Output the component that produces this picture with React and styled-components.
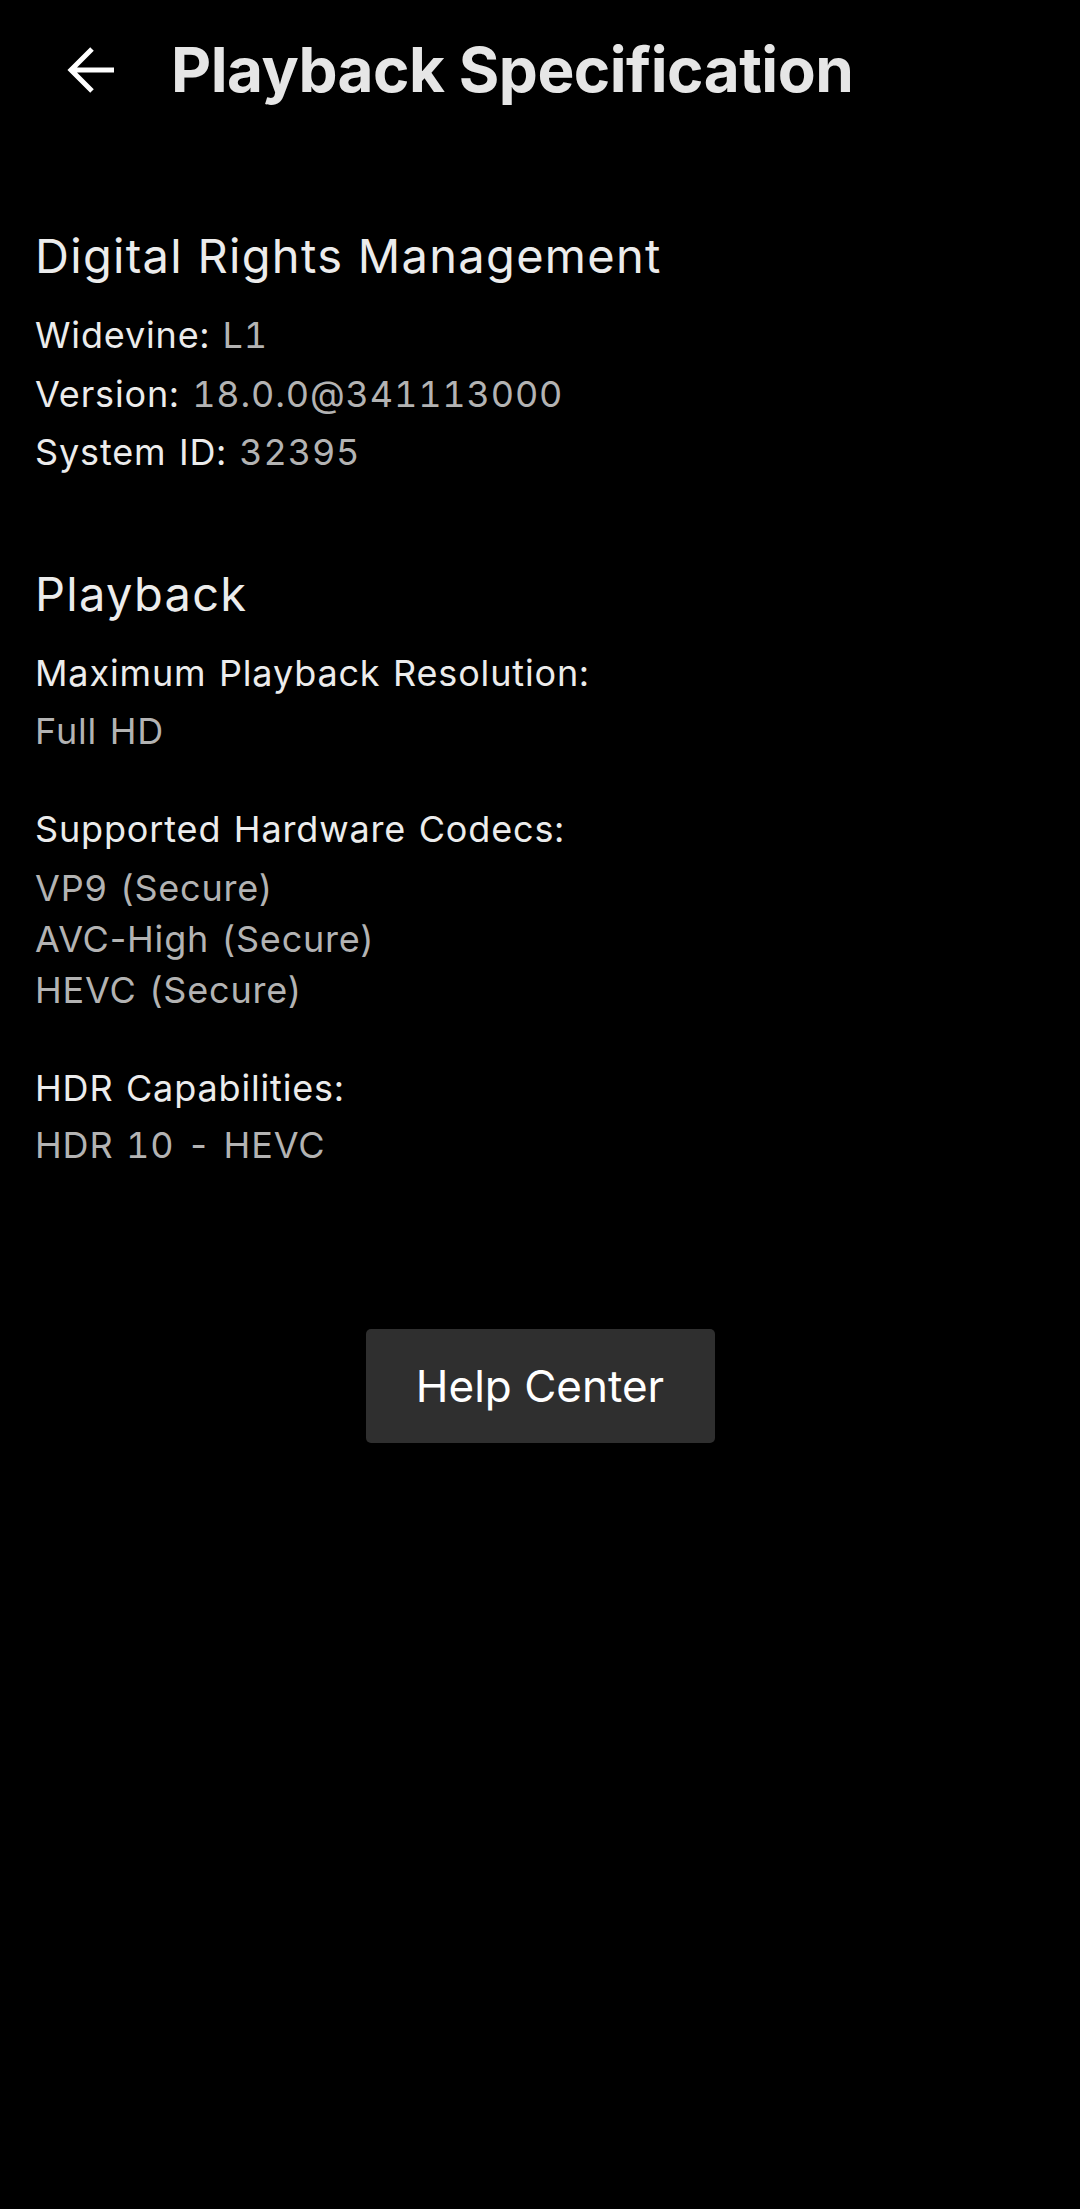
import React from "react";
import styled, { createGlobalStyle } from "styled-components";

const GlobalStyle = createGlobalStyle`
  html, body {
    margin: 0;
    padding: 0;
    background: #000;
  }
  body {
    font-family: Inter, "Noto Sans", sans-serif;
    -webkit-font-smoothing: antialiased;
  }
`;

const Screen = styled.div`
  width: 1080px;
  min-height: 2209px;
  background: #000;
  color: #e6e6e6;
`;

const Header = styled.header`
  display: flex;
  align-items: center;
  gap: 55px;
  padding: 39px 0 0 66px;
  height: 62px;
`;

const BackButton = styled.button`
  display: flex;
  align-items: center;
  justify-content: center;
  width: 50px;
  height: 50px;
  padding: 0;
  border: none;
  background: transparent;
  color: #fff;
  cursor: pointer;
`;

const Title = styled.h1`
  margin: 0;
  font-size: 62px;
  line-height: 62px;
  font-weight: 700;
  letter-spacing: -0.5px;
  color: #e6e6e6;
`;

const Content = styled.main`
  padding: 0 35px;
`;

const Section = styled.section`
  padding-top: ${(p) => p.$top}px;
`;

const SectionTitle = styled.h2`
  margin: 0 0 24px;
  font-size: 47px;
  line-height: 53px;
  font-weight: 400;
  letter-spacing: 1.3px;
  color: #ececec;
`;

const Line = styled.div`
  font-size: 36px;
  line-height: ${(p) => p.$lh || 58.5}px;
  letter-spacing: 0.85px;
  word-spacing: 2px;
  font-variant-numeric: tabular-nums;
  color: #ececec;
  white-space: nowrap;
`;

const Value = styled.span`
  color: #b3b3b3;
`;

const Group = styled.div`
  margin-top: ${(p) => p.$top || 0}px;
`;

const List = styled.div`
  margin-top: 4px;
  font-size: 36px;
  line-height: 51px;
  letter-spacing: 0.8px;
  word-spacing: 2px;
  color: #b3b3b3;
`;

const Footer = styled.div`
  display: flex;
  justify-content: center;
  padding-top: 156px;
`;

const HelpButton = styled.button`
  width: 349px;
  height: 114px;
  border: none;
  border-radius: 5px;
  background: #2f2f2f;
  color: #fff;
  font-family: Inter, "Noto Sans", sans-serif;
  font-size: 44px;
  font-weight: 400;
  cursor: pointer;
`;

const BackArrow = () => (
  <svg width="48" height="48" viewBox="0 0 48 48" fill="none">
    <path
      d="M47 24H5M25 3L4 24L25 45"
      stroke="currentColor"
      strokeWidth="5"
      strokeLinecap="butt"
      strokeLinejoin="miter"
    />
  </svg>
);

const drm = [
  ["Widevine:", "L1"],
  ["Version:", "18.0.0@341113000"],
  ["System ID:", "32395"],
];

const codecs = ["VP9 (Secure)", "AVC-High (Secure)", "HEVC (Secure)"];

export default function App() {
  return (
    <Screen>
      <GlobalStyle />
      <Header>
        <BackButton aria-label="Back">
          <BackArrow />
        </BackButton>
        <Title>Playback Specification</Title>
      </Header>

      <Content>
        <Section $top={128}>
          <SectionTitle>Digital Rights Management</SectionTitle>
          {drm.map(([label, value]) => (
            <Line key={label}>
              {label} <Value>{value}</Value>
            </Line>
          ))}
        </Section>

        <Section $top={85}>
          <SectionTitle>Playback</SectionTitle>
          <Group>
            <Line>Maximum Playback Resolution:</Line>
            <Line $lh={58}>
              <Value>Full HD</Value>
            </Line>
          </Group>
          <Group $top={40}>
            <Line>Supported Hardware Codecs:</Line>
            <List>
              {codecs.map((c) => (
                <div key={c}>{c}</div>
              ))}
            </List>
          </Group>
          <Group $top={43}>
            <Line>HDR Capabilities:</Line>
            <Line $lh={56}>
              <Value>HDR 10 - HEVC</Value>
            </Line>
          </Group>
        </Section>

        <Footer>
          <HelpButton>Help Center</HelpButton>
        </Footer>
      </Content>
    </Screen>
  );
}
